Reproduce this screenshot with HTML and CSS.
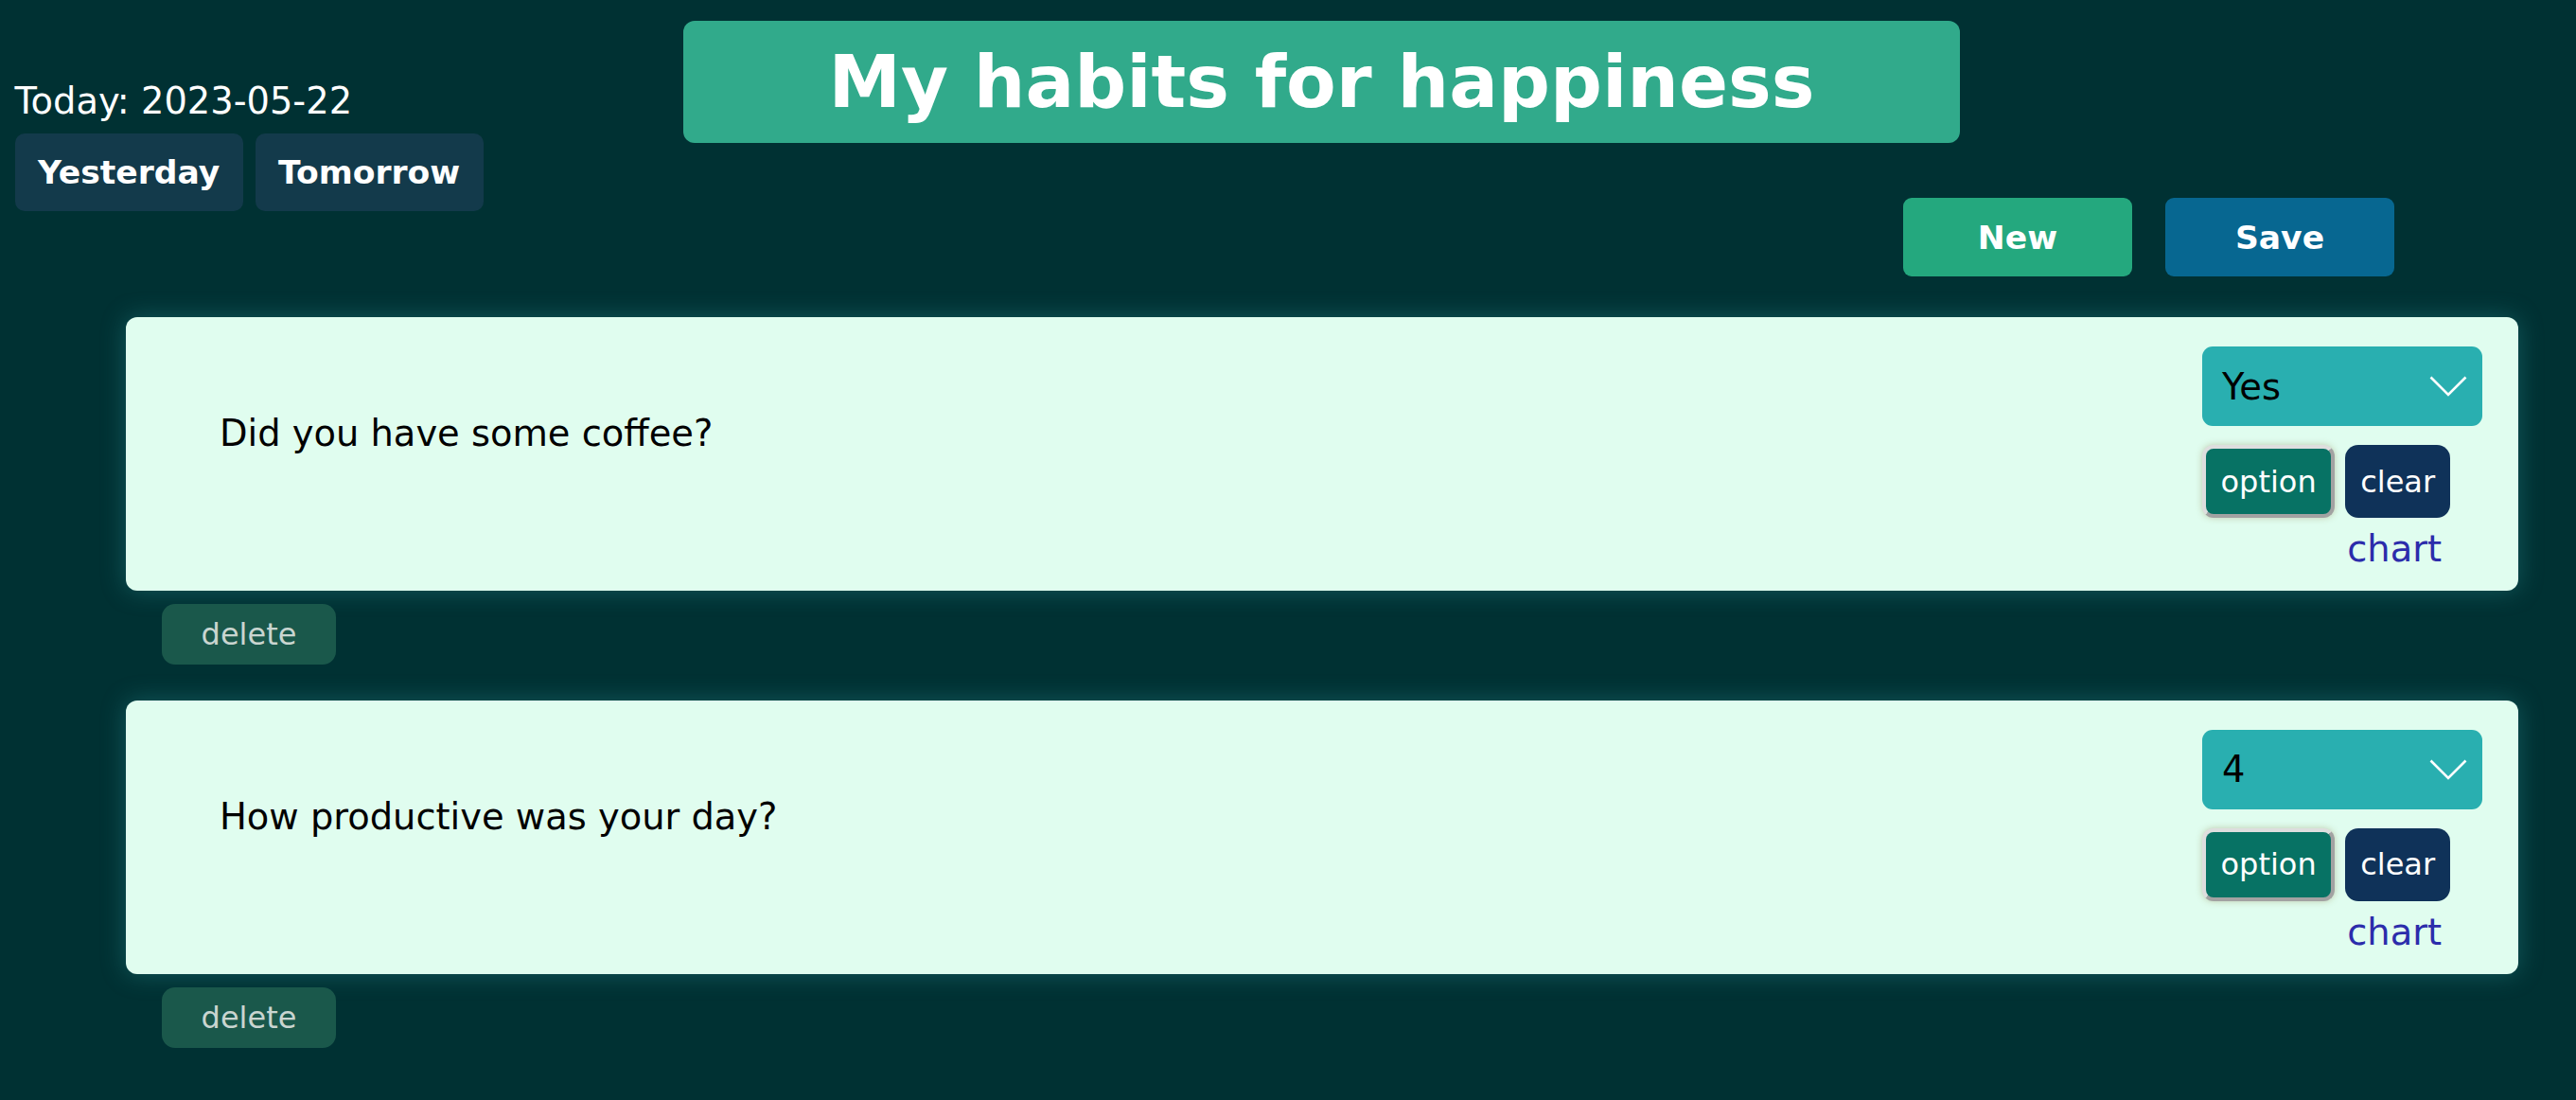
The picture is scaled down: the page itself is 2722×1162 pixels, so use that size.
FILE: index.html
```html
<!DOCTYPE html>
<html lang="en">
<head>
<meta charset="utf-8">
<title>My habits for happiness</title>
<link rel="stylesheet" href="styles.css">
</head>
<body>
<div class="top">
  <div class="datebox">
    <div class="today">Today: 2023-05-22</div>
    <div class="nav">
      <button class="navbtn">Yesterday</button>
      <button class="navbtn">Tomorrow</button>
    </div>
  </div>
  <div class="headmain">
    <h1 class="title">My habits for happiness</h1>
    <div class="actions">
      <button class="actbtn new">New</button>
      <button class="actbtn save">Save</button>
    </div>
  </div>
</div>

<div class="habits">
  <div class="habit">
    <div class="card">
      <div class="question">Did you have some coffee?</div>
      <div class="controls">
        <div class="select">
          <span class="selval">Yes</span>
          <svg class="chev" width="40" height="22" viewBox="0 0 40 22"><polyline points="1.5,1.5 20,20 38.5,1.5" fill="none" stroke="#ffffff" stroke-width="2.6"/></svg>
        </div>
        <div class="btnrow">
          <button class="opt">option</button>
          <button class="clr">clear</button>
        </div>
        <a class="chart">chart</a>
      </div>
    </div>
    <button class="del">delete</button>
  </div>

  <div class="habit">
    <div class="card">
      <div class="question">How productive was your day?</div>
      <div class="controls">
        <div class="select">
          <span class="selval">4</span>
          <svg class="chev" width="40" height="22" viewBox="0 0 40 22"><polyline points="1.5,1.5 20,20 38.5,1.5" fill="none" stroke="#ffffff" stroke-width="2.6"/></svg>
        </div>
        <div class="btnrow">
          <button class="opt">option</button>
          <button class="clr">clear</button>
        </div>
        <a class="chart">chart</a>
      </div>
    </div>
    <button class="del">delete</button>
  </div>
</div>
</body>
</html>
```

FILE: styles.css
```css
html, body {
  margin: 0;
  padding: 0;
  background: #003133;
  font-family: "DejaVu Sans", "Liberation Sans", sans-serif;
  font-size: 38.4px;
  color: #ffffff;
}

button {
  font-family: "DejaVu Sans", "Liberation Sans", sans-serif;
  margin: 0;
  cursor: pointer;
}

.top {
  display: flex;
  align-items: flex-start;
  padding-left: 15.6px;
}

.datebox {
  flex: none;
  width: 706.4px;
  padding-top: 84.5px;
}

.today {
  font-size: 38.4px;
  line-height: 44.7px;
  color: #ffffff;
}

.nav {
  display: flex;
  gap: 13px;
  margin-top: 11.5px;
}

.navbtn {
  width: 241px;
  height: 82px;
  padding: 0;
  border: none;
  border-radius: 10px;
  background: #133a4b;
  color: #ffffff;
  font-weight: bold;
  font-size: 34.56px;
}

.headmain {
  flex: 1;
  display: flex;
  flex-direction: column;
}

.title {
  width: 1349px;
  box-sizing: border-box;
  margin: 22px 0 0 0;
  padding: 19.8px 0;
  background: #31aa8b;
  border-radius: 12px;
  text-align: center;
  font-size: 76.8px;
  line-height: 89.4px;
  font-weight: bold;
  color: #ffffff;
}

.actions {
  display: flex;
  justify-content: flex-end;
  gap: 35px;
  padding-right: 192px;
  margin-top: 58px;
}

.actbtn {
  width: 242px;
  height: 83px;
  padding: 0;
  border: none;
  border-radius: 9px;
  color: #ffffff;
  font-weight: bold;
  font-size: 34.56px;
}

.new { background: #24a87e; }
.save { background: #076791; }

.habits {
  margin-top: 43px;
}

.habit {
  display: flex;
  flex-direction: column;
  align-items: flex-start;
  margin-bottom: 38.3px;
}

.card {
  box-sizing: border-box;
  margin-left: 133px;
  width: 2528px;
  display: flex;
  justify-content: space-between;
  align-items: flex-start;
  padding: 31px 38px 21px 99px;
  background: #e0fdef;
  border-radius: 12px;
  box-shadow: 0 0 26px rgba(40, 140, 145, 0.45);
}

.question {
  margin-top: 70px;
  color: #000000;
  font-size: 38.4px;
  line-height: 44.7px;
}

.controls {
  width: 296px;
  display: flex;
  flex-direction: column;
  align-items: flex-start;
}

.select {
  box-sizing: border-box;
  width: 296px;
  height: 84px;
  display: flex;
  align-items: center;
  justify-content: space-between;
  padding: 0 16px 0 21px;
  background: #29afb0;
  border-radius: 11px;
  color: #000000;
  font-size: 38.4px;
}

.chev {
  display: block;
}

.btnrow {
  display: flex;
  gap: 11px;
  margin-top: 20px;
}

.opt {
  height: 77px;
  padding: 0 15.5px;
  font-size: 32px;
  color: #ffffff;
  background: #077264;
  border: 4px solid;
  border-color: #dedede #a2a2a2 #a2a2a2 #dedede;
  border-radius: 12px;
  box-shadow: 0 0 7px rgba(150, 140, 90, 0.45);
}

.clr {
  height: 77px;
  padding: 0 16px;
  font-size: 32px;
  color: #ffffff;
  background: #0f3259;
  border: none;
  border-radius: 14px;
}

.chart {
  align-self: flex-end;
  margin-right: 43px;
  margin-top: 11px;
  font-size: 38.4px;
  line-height: 44.7px;
  color: #2c2cab;
  text-decoration: none;
  cursor: pointer;
}

.del {
  margin-left: 171px;
  margin-top: 14.3px;
  width: 184px;
  height: 63.7px;
  padding: 0;
  border: none;
  border-radius: 14px;
  background: #1a584b;
  color: #c9d5d0;
  font-size: 32px;
}
```
